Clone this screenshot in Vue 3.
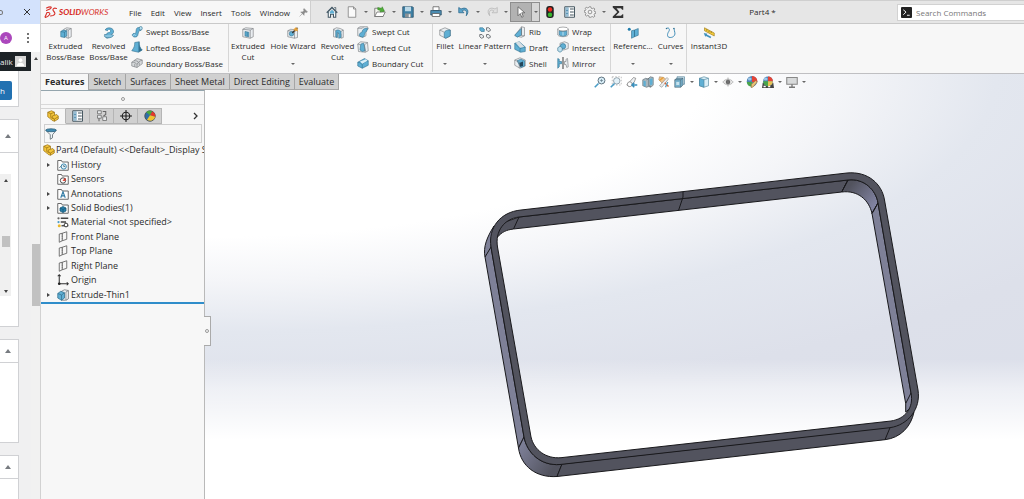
<script setup>
const B = '#5fafd4'
const D = '#33708f'
const G = '#73777b'
const L = '#e9edf0'

const icons = {
  extrude: `<path d="M5 3l4-2 6 1v11l-4 2-3-1z" fill="${L}" stroke="${G}"/><path d="M11 4l4-2M11 4v11M8 3l3 1" stroke="${G}" fill="none"/><path d="M1 6l3-2 5 1v7l-3 2-5-1z" fill="${B}" stroke="${D}"/><path d="M1 6l5 1 3-2M6 7v7" stroke="${D}" fill="none"/>`,
  revolve: `<path d="M3 4C4 0 13 0 14 5c1 4-3 5-5 6l2 2-6 2-3-5 3 0c-1-3 5-2 5-5 0-2-3-2-3 0z" fill="${B}" stroke="${D}"/><path d="M2 11c-2 4 10 5 12 0l-3-1" fill="#87c3df" stroke="${D}"/><circle cx="8" cy="5" r="1.5" fill="#fff"/>`,
  sweep: `<path d="M3 14c-3-2 0-5 2-4 3 1 0-8 5-8l4 1-1 3c-4-1-3 7-5 8-2 1-4 1-5 0z" fill="${B}" stroke="${D}"/><ellipse cx="13" cy="3" rx="2" ry="2.4" fill="#b7e0f1" stroke="${D}"/><path d="M3 13c0-2 3-2 3 0" fill="none" stroke="#d7f0fa"/>`,
  loft: `<path d="M5 2l6-1c0 6 1 8 4 11l-5 3-9-2c3-4 4-6 4-11z" fill="${B}" stroke="${D}"/><path d="M10 2c0 6 0 9 0 13l5-3c-3-3-4-5-4-11z" fill="${D}"/>`,
  boundary: `<path d="M1 7l7-5 7 2v5l-7 5-7-2z" fill="#d6d9db" stroke="${G}"/><path d="M1 7c3 0 5 0 7 3 1-3 4-5 7-6M8 10v4M4 5c3 0 5 0 7 3v3M5 13V9" fill="none" stroke="${G}"/>`,
  excut: `<path d="M1 3l4-2 10 1v11l-4 2-10-2z" fill="${L}" stroke="${G}"/><path d="M1 3l10 1 4-2M11 4v11" stroke="${G}" fill="none"/><path d="M4 6l5 1v6l-5-1z" fill="${B}" stroke="${D}"/><path d="M7 7v5" stroke="${D}"/>`,
  hole: `<path d="M1 5l4-2 9 1v10l-4 1-9-2z" fill="${L}" stroke="${G}"/><path d="M1 5l9 1 4-2M10 6v9" stroke="${G}" fill="none"/><ellipse cx="6" cy="9" rx="3" ry="3" fill="${B}" stroke="${D}"/><path d="M7 8l7-7" stroke="#333" stroke-width="2"/><path d="M12 0l1 2 2 0-1 2 1 2-3-1-2 1 0-2-2-1 2-1z" fill="#e6a23c"/>`,
  revcut: `<path d="M2 3l4-2 5 1 4 2v10l-3 1V9l-2-1-3 1v5l-5-1z" fill="${L}" stroke="${G}"/><path d="M5 5c2-2 5-1 7 1v8l-3 1V8L7 7v7l-2-1z" fill="${B}" stroke="${D}"/><path d="M2 3l3 2M12 6l3-2" stroke="${G}"/>`,
  swcut: `<path d="M1 3l3-2h10l1 3-3 2v7l-4 2-7-2z" fill="${L}" stroke="${G}"/><path d="M4 14c-2-3 0-5 3-6 0-3 2-5 7-5l-1 4c-3 0-2 6-5 8z" fill="${B}" stroke="${D}"/><path d="M1 3h6l2-2" fill="none" stroke="${G}"/>`,
  locut: `<path d="M1 4l4-3 9 1 1 11-4 2-9-1z" fill="${L}" stroke="${G}"/><path d="M5 4l4-1 2 10-4 1-3-2z" fill="${B}" stroke="${D}"/><path d="M10 5l1 10M1 4l3 1M10 5l4-3" stroke="${G}"/>`,
  bocut: `<path d="M1 7l9-5 5 3v6l-8 4-6-3z" fill="${B}" stroke="${D}"/><path d="M1 7c2 0 4 1 6 3 1-2 4-4 8-5M7 10v5" fill="none" stroke="${D}"/><path d="M4 6l8-3 2 2-7 4z" fill="#dceff7"/>`,
  fillet: `<path d="M1 4l7-3 7 3v8l-6 3-8-4z" fill="${L}" stroke="${G}"/><path d="M7 14V9c0-4 3-5 8-5v8l-6 3z" fill="${B}" stroke="${D}"/><path d="M1 4l6 3" stroke="${G}"/>`,
  pattern: `<path d="M1 1l4 0 2 2v3l-4 0-2-2z" fill="${B}" stroke="${D}"/><path d="M10 1l3 0 2 2v2l-3 1-2-2zM1 10l3 0 2 2v2l-3 1-2-2zM10 10l3 0 2 2v2l-3 1-2-2z" fill="${L}" stroke="${G}" stroke-width="1.300"/>`,
  rib: `<path d="M1 13l9-12 4 1v11l-4 2z" fill="${L}" stroke="${G}"/><path d="M1 12L10 3v9l-6 3z" fill="${B}" stroke="${D}"/><path d="M10 1v12l4 0" fill="none" stroke="${G}"/>`,
  draft: `<path d="M1 3l6-2 8 7v6l-6 1-8-4z" fill="${B}" stroke="${D}"/><path d="M1 3l7 7 7-2M8 10v5" fill="none" stroke="${D}"/><path d="M2 2l5-1 7 7-6 1z" fill="#d7dfe4"/>`,
  shell: `<path d="M1 4l7-3 7 3v8l-7 3-7-4z" fill="${L}" stroke="${G}"/><path d="M4 5l5-2 5 2v7l-5 2z" fill="${B}" stroke="${D}"/><path d="M7 8l5-2v6l-4 1z" fill="#24465a"/><path d="M1 4l6 3v8" fill="none" stroke="${G}"/>`,
  wrap: `<path d="M1 4v8c2 3 12 3 14 0V4z" fill="${L}" stroke="${G}"/><path d="M3 6c3 2 7 2 10 0v6c-3 2-7 2-10 0z" fill="${B}" stroke="${D}"/><ellipse cx="8" cy="4" rx="7" ry="2.6" fill="#fff" stroke="${G}"/><path d="M8 8v5" stroke="#fff"/>`,
  intersect: `<path d="M4 3l6-2 5 2v7l-6 2-5-3z" fill="${L}" stroke="${G}"/><circle cx="8" cy="7" r="3.6" fill="${B}" stroke="${D}"/><path d="M1 9l3-2 3 2v4l-3 2-3-2z" fill="#bfe0ee" stroke="${D}"/>`,
  mirror: `<path d="M1 2l2 1v3h3v3H3v4l-2 2z" fill="${B}" stroke="${D}"/><path d="M8 0v16" stroke="#444" stroke-width="1.4"/><path d="M10 6h2V3l2-1 1 11-2 1-1-4h-2z" fill="${L}" stroke="${G}"/>`,
  reference: `<path d="M6 5l4-1v9l-4 2zM10 4l5-2v9l-5 2z" fill="${B}" stroke="${D}"/><circle cx="3" cy="3" r="2" fill="#1e7cab"/>`,
  curves: `<path d="M2 2c3-2 5 1 3 4s-3 8 2 8 7-4 6-7 0-5-2-5" fill="none" stroke="#3c8ab5" stroke-width="1.3"/><circle cx="2" cy="2" r="1" fill="${D}"/><circle cx="12" cy="2" r="1" fill="${D}"/>`,
  instant: `<path d="M2 1l13 7v4L2 5z" fill="#f2cb3c" stroke="#9a7613"/><path d="M5 3v2M8 5v2M11 6v2" stroke="#73540c"/><path d="M1 8l5 1-1 1 6 3-1 2-6-3-1 1z" fill="#4191bd"/>`,
  home: `<path d="M3 8v7h3v-4h4v4h3V8" fill="#fff" stroke="#405563" stroke-width="1.4"/><path d="M1 9l7-7 7 7" fill="none" stroke="#405563" stroke-width="1.7"/><path d="M5 8l3-3 3 3v2H5z" fill="${B}"/><path d="M11 2h2v4" fill="none" stroke="#405563"/>`,
  file: `<path d="M3 1h7l3 3v11H3z" fill="#fafafa" stroke="#777"/><path d="M10 1v3h3" fill="none" stroke="#777"/>`,
  open: `<path d="M1 14V3h5l1 2h5v9z" fill="#f4f4ef" stroke="#666"/><path d="M1 14l3-6h11l-3 6z" fill="#fff" stroke="#666"/><path d="M5 2l5 1 1-2 3 6-6 1 1-2-4-1z" fill="#4fad39" stroke="#2f7c1e" stroke-width=".6"/>`,
  save: `<path d="M1 1h13l1 1v13H1z" fill="#3f81a6" stroke="#244c64"/><path d="M4 1h8v6H4z" fill="#bcd9e7"/><path d="M4 10h8v5H4z" fill="#8a9297"/><path d="M9 11h2v4H9z" fill="#eee"/>`,
  print: `<path d="M4 1h8v5H4z" fill="#fff" stroke="#555"/><path d="M1 6h14v6H1z" fill="#4c8db2" stroke="#264e66"/><path d="M3 10h10v4H3z" fill="#fff" stroke="#555"/>`,
  undo: `<path d="M1 2v7h7L5.500 6.500C9 4 13 6 11 13c5-6 1-13-7-9z" fill="#5ba4cb" stroke="#28678b"/>`,
  redo: `<path d="M15 2v7H8l2.500-2.500C7 4 3 6 5 13 0 7 4 0 12 4z" fill="#e0e0e0" stroke="#b5b5b5"/>`,
  cursor: `<path d="M4 1v12l3-3 2 5 2-1-2-5h4z" fill="#fff" stroke="#555"/>`,
  traffic: `<rect x="3" y="0" width="10" height="16" rx="4" fill="#222"/><circle cx="8" cy="4.500" r="3" fill="#ef2b20"/><circle cx="8" cy="11.500" r="3" fill="#37b52d"/>`,
  props: `<path d="M1 1h13v14H1z" fill="#fff" stroke="#44555f" stroke-width="1.300"/><path d="M2 2h4v12H2z" fill="#5d97b8"/><path d="M3 4h2M3 8h2M3 12h2" stroke="#fff" stroke-width="1.500"/><path d="M8 4h5M8 8h5M8 12h5" stroke="#44555f" stroke-width="1.500"/>`,
  gear: `<path d="M7 1h2l.6 2 1.500.6L13 2.600l1.400 1.400-1 1.900.6 1.500 2 .6v1.600l-2 .6-.6 1.500 1 1.900-1.400 1.400-1.900-1-1.500.6L9 15H7l-.6-2-1.500-.6-1.900 1L1.600 12l1-1.900L2 8.600 0 8V6.500l2-.6.6-1.500-1-1.400L3 1.600l1.900 1L6.400 2z" fill="#f1f1f1" stroke="#777"/><circle cx="8" cy="8" r="2.500" fill="none" stroke="#777"/>`,
  sigma: `<path d="M1 0h14v5h-1.500L12 3H6l4 5-5 5h7l2-2h1v5H1v-2L7 8 1 2z" fill="#333"/>`,
  pin: `<path d="M9 1l6 6-2 1-2-1-2 3v3l-6-6h3l3-2-1-2zM6 10l-5 5" fill="#8b8b8b" stroke="#8b8b8b"/>`,
  zoomfit: `<circle cx="10" cy="6" r="4.600" fill="#d8edf7" stroke="#60727d" stroke-width="1.300"/><path d="M6 10l-5 5" stroke="#4a9dc6" stroke-width="2.200"/><path d="M10 4v4M8 6h4" stroke="#58717e"/>`,
  zoomarea: `<path d="M3 1h12v11H3z" fill="none" stroke="#999" stroke-dasharray="2 2"/><circle cx="9" cy="6.500" r="4.300" fill="#e3f1f8" stroke="#60727d"/><path d="M6 10l-5 5" stroke="#4a9dc6" stroke-width="2.200"/>`,
  prev: `<path d="M1 12l9-10 3 1-2 5-6 6z" fill="#edf0f2" stroke="#666"/><circle cx="5" cy="11" r="3.200" fill="#fff" stroke="#666"/><path d="M8 12h7M11 9l-3 3 3 3" fill="none" stroke="#398ebb" stroke-width="2"/>`,
  section: `<path d="M1 5l4-2 3 1 3-3 4 1v10l-3 3-3-1-3 1-5-2z" fill="#a9b6bd" stroke="#56656d"/><path d="M6 5l3-2v10l3 1" fill="none" stroke="#56656d"/><path d="M2 6l3 1v7l-3-1zM10 4l4-1v8l-3 2z" fill="${B}"/>`,
  dynamic: `<path d="M2 1l6 1 4 4-6 4-5-5z" fill="#f0c48d" stroke="#a88a6c"/><path d="M2 13L12 2l2 2L5 15z" fill="#eee" stroke="#888"/><path d="M2 6l5-4" stroke="#e8a035" stroke-width="2"/><path d="M9 9l5 5" stroke="#d96735" stroke-width="1.800"/><path d="M10 15l3-7" stroke="#5d9fbf" stroke-width="1.800"/>`,
  view: `<path d="M4 1h10v10H4z" fill="#d1e8f2" stroke="#47768f"/><path d="M1 5l3-2h8v9l-3 3H1z" fill="#78b3cf" stroke="#47616f"/><path d="M1 5h8v10M9 5l3-2" fill="none" stroke="#47616f"/><path d="M3 8h4v4H3z" fill="#c8e3ee"/>`,
  display: `<path d="M2 3l6-2 6 2v10l-6 2-6-2z" fill="#d9eef7" stroke="#4c8199"/><path d="M2 3l6 2v10l-6-2z" fill="${B}" stroke="#4c8199"/><path d="M8 5l6-2" stroke="#4c8199"/>`,
  eye: `<path d="M1 8c4-5 10-5 14 0-4 5-10 5-14 0z" fill="#e7e7e7" stroke="#999"/><circle cx="8" cy="8" r="3" fill="#666"/><path d="M8 2v12" stroke="#888"/>`,
  ball: `<circle cx="8" cy="7" r="7" fill="#4f84b5"/><path d="M8 8V0a7 7 0 0 1 7 8z" fill="#e54335"/><path d="M1 8h7v6a7 7 0 0 1-7-6z" fill="#4aa54a"/><path d="M7 11l6-5 2 2-5 6-3 2z" fill="#e8c377" stroke="#89693c"/><ellipse cx="5" cy="4" rx="2.500" ry="2" fill="#9dc7e8"/>`,
  scene: `<path d="M1 9h14l1 7H0z" fill="#444"/><path d="M2 13h3v2H2zM8 13h3v2H8z" fill="#fff"/><circle cx="8" cy="7" r="6.500" fill="#4f84b5"/><path d="M8 7V0.500a6.500 6.500 0 0 1 6.500 6.500z" fill="#e54335"/><path d="M8 7h6.500a6.500 6.500 0 0 1-9 6z" fill="#e8c354"/><path d="M1.500 7H8v6.500a6.500 6.500 0 0 1-6.500-6.500z" fill="#4aa54a"/><ellipse cx="5" cy="4" rx="2.500" ry="2" fill="#9dc7e8"/>`,
  monitor: `<path d="M1 2h14v9H1z" fill="#d8dadb" stroke="#888" stroke-width="1.400"/><path d="M8 11v3M4 15h8" stroke="#777" stroke-width="1.800"/>`,
  part: `<path d="M1 3l5-2 4 2v4l3-1 2 2v4l-5 3-3-1-2-2-4-3z" fill="#f4c63b" stroke="#9c7415"/><path d="M1 3l4 2 5-2M5 5v5l4 2M10 7l-3 1v2l3 2 5-3M10 12v3" fill="none" stroke="#9c7415"/>`,
  config: `<path d="M2 1h5v4H2zM2 7h5v4H2zM9 9h5v5H9z" fill="#e8eaec" stroke="#666"/><path d="M9 2h4v4l-3 2M4 11v4" fill="none" stroke="#666" stroke-width="1.400"/>`,
  target: `<circle cx="8" cy="8" r="5" fill="none" stroke="#222" stroke-width="1.500"/><path d="M8 0v16M0 8h16" stroke="#222" stroke-width="1.500"/>`,
  ball2: `<circle cx="8" cy="8" r="7" fill="#2f6ea8" stroke="#444"/><path d="M8 7L3 3a7 7 0 0 1 8-1z" fill="#48a83f"/><path d="M8 7l3-5a7 7 0 0 1 4 7z" fill="#e5382b"/><path d="M8 7l7 2a7 7 0 0 1-11 4z" fill="#f0c332"/>`,
  filter: `<path d="M1 3l6 6v6l3-2V9l5-6z" fill="#eff5f8" stroke="#4c5b63"/><ellipse cx="8" cy="3" rx="7" ry="2" fill="#3f8cb4" stroke="#2d5f7a"/>`,
  history: `<path d="M1 2h5l1 2h8v11H1z" fill="#fff" stroke="#666" stroke-width="1.300"/><circle cx="9" cy="10" r="3.500" fill="#e3f2f9" stroke="#3786ae" stroke-width="1.300"/><path d="M9 8v2h2M3 12l3-3" fill="none" stroke="#3a5868"/>`,
  sensors: `<path d="M1 2h5l1 2h8v11H1z" fill="#fff" stroke="#666" stroke-width="1.300"/><circle cx="8" cy="10" r="3.600" fill="#fff" stroke="#444" stroke-width="1.300"/><path d="M8 10l3-3v3z" fill="#d83528" stroke="#d83528"/>`,
  annot: `<path d="M1 2h5l1 2h8v11H1z" fill="#fff" stroke="#666" stroke-width="1.300"/><path d="M5 13l3-8 3 8M6 10.500h4" fill="none" stroke="#2e79a3" stroke-width="1.500"/>`,
  bodies: `<path d="M1 2h5l1 2h8v11H1z" fill="#fff" stroke="#666" stroke-width="1.300"/><path d="M4 8l4-2 4 2v4l-4 2-4-2z" fill="#2982ad" stroke="#1b5573"/><path d="M4 8l4 2 4-2M8 10v4" fill="none" stroke="#1b5573"/>`,
  material: `<path d="M5 3h10M5 8h7" stroke="#444" stroke-width="1.800"/><path d="M6 13h9" stroke="#444" stroke-width="1.800"/><circle cx="2" cy="3" r="1.500" fill="#666"/><circle cx="2" cy="8" r="1.500" fill="#4b9cc9"/><circle cx="3" cy="13" r="2" fill="#e9b82c"/><circle cx="12" cy="12" r="2.500" fill="#fff" stroke="#333" stroke-width="1.300"/>`,
  plane: `<path d="M3 4l4-1v10l-4 2zM7 3l6-2v10l-6 2" fill="none" stroke="#666" stroke-width="1.200"/><path d="M7 3v10" stroke="#666" stroke-dasharray="2 1"/>`,
  origin: `<path d="M3 1v12h12M1 3l2-2 2 2M13 11l2 2-2 2" fill="none" stroke="#333" stroke-width="1.400"/><circle cx="3" cy="13" r="1.800" fill="#222"/>`,
  thin: `<path d="M6 3l4-2 5 1v11l-4 2H6z" fill="${L}" stroke="${G}"/><path d="M12 4v11l3-2V2z" fill="#fff" stroke="${G}"/><path d="M1 6l4-3 5 2v7l-4 3-5-3z" fill="${B}" stroke="${D}"/><path d="M1 6l5 2 4-3M6 8v7" fill="none" stroke="${D}"/>`,
}

const menus = ['File', 'Edit', 'View', 'Insert', 'Tools', 'Window']
const quick = [
  { icon: 'home', label: 'Home' },
  { icon: 'file', label: 'New', more: true },
  { icon: 'open', label: 'Open', more: true },
  { icon: 'save', label: 'Save', more: true },
  { icon: 'print', label: 'Print', more: true },
  { icon: 'undo', label: 'Undo', more: true },
  { icon: 'redo', label: 'Redo', more: true },
  { icon: 'cursor', label: 'Select', more: true, active: true },
  { icon: 'traffic', label: 'Rebuild' },
  { icon: 'props', label: 'File Properties' },
  { icon: 'gear', label: 'Options', more: true },
  { icon: 'sigma', label: 'Equations' },
]
const ribbon = [
  { id: 'boss', columns: [
    { icon: 'extrude', lines: ['Extruded', 'Boss/Base'] },
    { icon: 'revolve', lines: ['Revolved', 'Boss/Base'] },
    { list: [['sweep', 'Swept Boss/Base'], ['loft', 'Lofted Boss/Base'], ['boundary', 'Boundary Boss/Base']] },
  ] },
  { id: 'cut', columns: [
    { icon: 'excut', lines: ['Extruded', 'Cut'] },
    { icon: 'hole', lines: ['Hole Wizard'], more: true },
    { icon: 'revcut', lines: ['Revolved', 'Cut'] },
    { list: [['swcut', 'Swept Cut'], ['locut', 'Lofted Cut'], ['bocut', 'Boundary Cut']] },
  ] },
  { id: 'modify', columns: [
    { icon: 'fillet', lines: ['Fillet'], more: true },
    { icon: 'pattern', lines: ['Linear Pattern'], more: true },
    { list: [['rib', 'Rib'], ['draft', 'Draft'], ['shell', 'Shell']] },
    { list: [['wrap', 'Wrap'], ['intersect', 'Intersect'], ['mirror', 'Mirror']] },
  ] },
  { id: 'geometry', columns: [
    { icon: 'reference', lines: ['Referenc...'], more: true },
    { icon: 'curves', lines: ['Curves'], more: true },
  ] },
  { id: 'instant', columns: [{ icon: 'instant', lines: ['Instant3D'] }] },
]
const tabs = ['Features', 'Sketch', 'Surfaces', 'Sheet Metal', 'Direct Editing', 'Evaluate']
const viewTools = [
  { icon: 'zoomfit', label: 'Zoom to Fit' },
  { icon: 'zoomarea', label: 'Zoom to Area' },
  { icon: 'prev', label: 'Previous View' },
  { icon: 'section', label: 'Section View' },
  { icon: 'dynamic', label: 'Dynamic Annotation Views' },
  { icon: 'view', label: 'View Orientation', more: true },
  { icon: 'display', label: 'Display Style', more: true },
  { icon: 'eye', label: 'Hide/Show Items', more: true },
  { icon: 'ball', label: 'Edit Appearance' },
  { icon: 'scene', label: 'Apply Scene', more: true },
  { icon: 'monitor', label: 'View Settings', more: true },
]
const panelTabs = [
  ['part', 'FeatureManager'],
  ['props', 'PropertyManager'],
  ['config', 'ConfigurationManager'],
  ['target', 'DimXpertManager'],
  ['ball2', 'DisplayManager'],
]
const tree = [
  { icon: 'history', text: 'History', open: true },
  { icon: 'sensors', text: 'Sensors' },
  { icon: 'annot', text: 'Annotations', open: true },
  { icon: 'bodies', text: 'Solid Bodies(1)', open: true },
  { icon: 'material', text: 'Material <not specified>' },
  { icon: 'plane', text: 'Front Plane' },
  { icon: 'plane', text: 'Top Plane' },
  { icon: 'plane', text: 'Right Plane' },
  { icon: 'origin', text: 'Origin' },
  { icon: 'thin', text: 'Extrude-Thin1', open: true },
]
</script>

<template>
  <div class="screen">
    <aside class="browser">
      <div class="tabstrip">
        <i class="tab-dot"></i>
        <button class="close" aria-label="Close tab">
          <svg viewBox="0 0 8 8"><path d="M1 1l6 6M7 1L1 7" stroke="#333" fill="none" /></svg>
        </button>
      </div>
      <div class="addressbar">
        <span class="profile">A</span>
        <button class="dots" aria-label="Browser menu"><i></i><i></i><i></i></button>
      </div>
      <div class="page">
        <div class="page-main">
          <div class="adminbar"><span>alik</span>
            <svg viewBox="0 0 12 12"><path d="M0 0h12v12H0z" fill="#d6d6d6" /><circle cx="6" cy="4.500" r="2" fill="#fff" /><path d="M2 11c0-5 8-5 8 0z" fill="#fff" /></svg>
          </div>
          <div class="box box-top"><button class="publish">h</button></div>
          <div class="box box-tall">
            <div class="box-head"><i class="up"></i></div>
            <div class="mini-scroll"><i class="up small"></i><i class="mini-thumb"></i><i class="down"></i></div>
          </div>
          <div class="box box-mid"><div class="box-head short"><i class="up"></i></div></div>
          <div class="box box-last"><div class="box-head short"><i class="up"></i></div></div>
        </div>
        <div class="page-scroll"><i class="up small"></i><i class="thumb"></i></div>
      </div>
    </aside>

    <div class="app">
      <header class="titlebar">
        <div class="menu">
          <div class="brand">
            <svg viewBox="0 0 26 26"><path d="M5 4c6-3 11-3 9 0-1 2-4 3-7 4l-2 1M3 23c7-2 12-9 6-10l-3 0-4 9M25 5c-5-2-9 1-6 5 3 3 5 7-1 9l-5 1" fill="none" stroke="#d8322b" stroke-width="2.200" stroke-linecap="round" /></svg>
            <span class="word"><b>SOLID</b>WORKS</span>
          </div>
          <nav class="menus"><a v-for="m in menus" :key="m" href="#">{{ m }}</a></nav>
          <button class="pin" aria-label="Pin menu"><svg viewBox="0 0 16 16" v-html="icons.pin"></svg></button>
        </div>
        <div class="quick">
          <div v-for="q in quick" :key="q.label" class="q" :class="{ active: q.active, more: q.more }">
            <button :aria-label="q.label"><svg viewBox="0 0 16 16" v-html="icons[q.icon]"></svg></button>
            <button v-if="q.more" class="drop" :aria-label="q.label + ' options'"><i class="caret"></i></button>
          </div>
        </div>
        <div class="doc">Part4 *</div>
        <label class="search">
          <svg viewBox="0 0 12 12"><rect width="12" height="12" rx="1" fill="#222" /><path d="M2.500 3l3 2.500-3 3M6.500 9h3" fill="none" stroke="#fff" /></svg>
          <input type="text" placeholder="Search Commands" aria-label="Search Commands" />
        </label>
      </header>

      <div class="ribbon">
        <div v-for="g in ribbon" :key="g.id" class="group" :class="g.id">
          <template v-for="(c, i) in g.columns" :key="i">
            <div v-if="c.list" class="list">
              <button v-for="r in c.list" :key="r[1]" class="row">
                <svg viewBox="0 0 16 16" v-html="icons[r[0]]"></svg><span>{{ r[1] }}</span>
              </button>
            </div>
            <button v-else class="big">
              <svg viewBox="0 0 16 16" v-html="icons[c.icon]"></svg>
              <span v-for="l in c.lines" :key="l">{{ l }}</span>
              <i v-if="c.more" class="caret"></i>
            </button>
          </template>
        </div>
      </div>

      <main class="work">
        <svg class="model" viewBox="41 74 983 425" preserveAspectRatio="xMidYMid slice" role="img" aria-label="Thin rectangular frame">
          <defs>
            <linearGradient id="cornerA" x1="847" y1="184" x2="874" y2="205" gradientUnits="userSpaceOnUse"><stop offset="0.1" stop-color="#52535e" /><stop offset="1" stop-color="#8082a0" /></linearGradient>
            <linearGradient id="cornerB" x1="520" y1="448" x2="556" y2="472" gradientUnits="userSpaceOnUse"><stop offset="0" stop-color="#7c7e96" /><stop offset="0.9" stop-color="#52535e" /></linearGradient>
          </defs>
          <g stroke="#19191c" stroke-width="1" stroke-linejoin="round">
            <path fill="#7e8097" d="M494 226C487 237 483 247 485 257L518.500 448L524 437L491 247Z" />
            <path fill="url(#cornerB)" d="M518.500 448C521 466 536 478 557 476.500L562 464.300L560 464.500C541 466 527 453 524 437Z" />
            <path fill="#52535e" d="M557 476.500L885 439.700C900 438 911 427 914 412L890 427L562 464Z" />
            <path fill="#52535e" d="M497.500 237C502 232 506 230 513.500 229L841.700 192L848 180L519 217L497 225Z" />
            <path fill="url(#cornerA)" d="M841.700 192C858 190 869 200 872 213.500L878 203C876 190 864 178 848 180Z" />
            <path fill="#7e8097" d="M872 213.500L905.700 403.500V412L914 405L911 393L878 203Z" />
            <path fill="#52535e" fill-rule="evenodd" d="M521 210L847 173C868 171 882 184 884.500 200L918 390C921 409 908 425 890 427.700L560 464.500C541 466 527 453 524 437L491 247C488 228 500 212 521 210ZM519 217L848 180C864 178 876 190 878 203L911 393C914 408 905 419 891 421L561 457.700C546 459 534 450 531 437L497.500 247C495 231 504 219 519 217Z" />
            <path fill="none" d="M519 217L513.500 229M683 192V197L678.500 210.500M848 180L841.700 192M878 203L872 213.500M491 247L485 257M890 427.700L885 439.700M911 393L905.700 403.500" />
          </g>
        </svg>

        <div class="topline">
          <nav class="tabs" aria-label="Command manager">
            <button v-for="(t, i) in tabs" :key="t" :class="{ on: i === 0 }">{{ t }}</button>
          </nav>
          <div class="headsup">
            <template v-for="v in viewTools" :key="v.label">
              <button :aria-label="v.label"><svg viewBox="0 0 16 16" v-html="icons[v.icon]"></svg><i v-if="v.more" class="caret"></i></button>
            </template>
          </div>
        </div>

        <section class="panel">
          <div class="grip"><i></i></div>
          <div class="ptabs">
            <button v-for="(p, i) in panelTabs" :key="p[1]" :class="{ on: i === 0 }" :aria-label="p[1]">
              <svg viewBox="0 0 16 16" v-html="icons[p[0]]"></svg>
            </button>
            <button class="next" aria-label="More tabs"><svg viewBox="0 0 8 8"><path d="M2 1l3 3-3 3" fill="none" stroke="#333" stroke-width="1.300" /></svg></button>
          </div>
          <label class="filter">
            <svg viewBox="0 0 16 16" v-html="icons.filter"></svg>
            <input type="text" aria-label="Filter tree" />
          </label>
          <ul class="tree">
            <li class="root"><svg viewBox="0 0 16 16" v-html="icons.part"></svg><span>Part4 (Default) &lt;&lt;Default&gt;_Display S</span></li>
            <li v-for="n in tree" :key="n.text">
              <i class="twist" :class="{ show: n.open }"></i>
              <svg viewBox="0 0 16 16" v-html="icons[n.icon]"></svg>
              <span>{{ n.text }}</span>
            </li>
          </ul>
          <div class="rollback"></div>
          <button class="handle" aria-label="Collapse panel"><i></i></button>
        </section>
      </main>
    </div>
  </div>
</template>

<style>
body { overflow: hidden; }
</style>

<style scoped>
* { box-sizing: border-box; }
.screen { display: flex; height: 100vh; overflow: hidden; background: #f0f0f1; color: #2b2b2b; font: 9px/12px "Open Sans", "Noto Sans", sans-serif; }
button, input { font: inherit; color: inherit; border: 0; padding: 0; margin: 0; background: none; }
svg, i { display: block; flex: none; }
a { color: inherit; text-decoration: none; }
.caret { border: 2px solid transparent; border-top-color: #666; border-bottom: 0; }
.up { border: 3px solid transparent; border-bottom: 4px solid #777b80; border-top: 0; }
.up.small { border-width: 0 2px 3px; border-bottom-color: #444; }
.down { border: 2px solid transparent; border-top: 3px solid #444; border-bottom: 0; }

.browser { width: 41px; flex: none; display: flex; flex-direction: column; border-right: 1px solid #d2d2d2; overflow: hidden; }
.tabstrip { height: 24px; flex: none; background: #d3e2fc; display: flex; align-items: center; justify-content: space-between; padding-right: 9px; }
.tab-dot { width: 3px; height: 5px; border: 1px solid #777; border-left: 0; border-radius: 0 3px 3px 0; }
.close svg { width: 8px; height: 8px; }
.addressbar { height: 28px; flex: none; background: #fff; display: flex; align-items: center; justify-content: space-between; padding-right: 11px; }
.profile { width: 12px; height: 12px; border-radius: 6px; background: #ab47bc; color: #fff; font-size: 6px; text-align: center; }
.dots { display: grid; gap: 2px; }
.dots i { width: 2px; height: 2px; border-radius: 1px; background: #444; }
.page { flex: 1; display: flex; min-height: 0; }
.page-main { flex: 1; display: flex; flex-direction: column; min-width: 0; }
.page-scroll { width: 9px; flex: none; background: #f1f1f1; padding-top: 5px; display: flex; flex-direction: column; align-items: center; }
.page-scroll .thumb { width: 8px; height: 62px; margin-top: 184px; background: #c1c1c1; }
.adminbar { height: 19px; flex: none; background: #1d2327; color: #eee; display: flex; align-items: center; justify-content: space-between; font-size: 8px; padding-right: 5px; }
.adminbar svg { width: 11px; height: 11px; }
.box { width: 19px; flex: none; background: #fff; border: 1px solid #d0d1d4; border-left: 0; margin-bottom: 12px; }
.box-top { height: 36px; border-top: 0; padding-top: 10px; }
.publish { display: block; width: 12px; height: 19px; background: #2271b1; color: #fff; border-radius: 0 2px 2px 0; text-align: left; font-size: 8px; }
.box-tall { height: 208px; }
.box-mid { height: 104px; }
.box-last { height: 104px; }
.box-head { height: 33px; border-bottom: 1px solid #d0d1d4; display: flex; align-items: center; padding-left: 5px; }
.box-head.short { height: 23px; }
.mini-scroll { width: 11px; height: 122px; margin-top: 21px; padding: 5px 0; background: #f0f0f0; display: flex; flex-direction: column; align-items: center; }
.mini-thumb { width: 8px; height: 11px; margin: 54px 0 43px; background: #c1c1c1; }

.app { flex: 1; min-width: 0; display: flex; flex-direction: column; }
.titlebar { height: 24px; flex: none; display: flex; background: #e6e6e6; border-top: 1px solid #cfcfcf; border-bottom: 1px solid #c9c9c9; font-size: 8px; }
.menu { width: 270px; flex: none; display: flex; align-items: center; padding-left: 3px; background: #f7f7f7; border-right: 1px solid #cfcfcf; }
.brand { display: flex; align-items: center; gap: 2px; width: 85px; color: #d8322b; }
.brand svg { width: 13px; height: 13px; }
.word { font-family: Lato, sans-serif; font-style: italic; font-size: 8px; }
.word b { font-weight: 900; }
.menus { display: flex; gap: 9px; padding-top: 2px; }
.pin { margin-left: 9px; }
.pin svg { width: 9px; height: 9px; }
.quick { display: flex; align-items: center; padding-left: 11px; }
.q { display: flex; height: 20px; align-items: center; }
.q > button { width: 20px; height: 20px; display: flex; align-items: center; justify-content: center; }
.q svg { width: 12px; height: 12px; }
.q > .drop { width: 8px; }
.q.active { background: #b2b2b2; border: 1px solid #8e8e8e; }
.q.active .drop { background: #d6d6d6; border-left: 1px solid #8e8e8e; height: 18px; }
.q.active > button { height: 18px; }
.doc { flex: 1; text-align: center; align-self: center; }
.search { width: 127px; flex: none; margin: 3px 0 2px; display: flex; align-items: center; gap: 4px; padding-left: 3px; background: #fff; border: 1px solid #d2d2d2; border-right: 0; }
.search svg { width: 11px; height: 11px; }
.search input { min-width: 0; flex: 1; outline: 0; }
.search input::placeholder { color: #777; opacity: 1; }

.ribbon { height: 50px; flex: none; display: flex; padding-left: 3px; background: #f7f7f7; border-bottom: 1px solid #bfbfc2; font-size: 8px; line-height: 11px; }
.ribbon svg, .headsup svg { stroke-width: 0.8; }
.group { display: grid; border-right: 1px solid #d6d6d6; height: 48px; white-space: nowrap; }
.boss { grid-template-columns: 43px 43px 98px; }
.cut { grid-template-columns: 38px 52px 37px 76px; }
.modify { grid-template-columns: 24px 56px 43px 54px; }
.geometry { grid-template-columns: 44px 31px; }
.instant { grid-template-columns: 44px; border-right: 0; }
.big { display: flex; flex-direction: column; align-items: center; padding-top: 3px; height: 48px; }
.big svg { width: 12px; height: 12px; margin-bottom: 1px; }
.big .caret { margin-top: 12px; }
.list { display: grid; grid-template-rows: 15px 16px 16px; padding-left: 1px; }
.row { display: flex; align-items: center; gap: 3px; text-align: left; }
.row svg { width: 12px; height: 12px; }

.work { flex: 1; min-height: 0; display: grid; grid-template: 16px minmax(0, 1fr) / 164px minmax(0, 1fr);
  background: linear-gradient(180deg, rgba(255,255,255,0) 67%, rgba(255,255,255,.5) 74%, #fff 86%), radial-gradient(87% 66% at 17% 0, #fff 58%, #f4f5f8 74%, #e3e7ef 92%, #dde0ea 120%, #dadeea 170%); }
.model { grid-area: 1 / 1 / 3 / 3; width: 100%; height: 100%; min-height: 0; }
.topline { grid-area: 1 / 1 / 2 / 3; display: flex; }
.tabs { display: flex; height: 16px; }
.tabs button { padding: 0 4px; background: #d0d0d0; border-right: 1px solid #a5a5a5; border-bottom: 1px solid #a9a9a9; white-space: nowrap; line-height: 14px; }
.tabs .on { background: #f7f7f7; font-weight: 700; border-bottom: 0; }
.headsup { display: flex; align-items: center; margin-left: 253px; height: 16px; }
.headsup button { display: flex; align-items: center; gap: 4px; padding: 0 2px; }
.headsup svg { width: 12px; height: 12px; }

.panel { grid-area: 2 / 1 / 3 / 2; position: relative; background: #f7f7f7; border-top: 1px solid #94a5ad; border-right: 1px solid #b9b9b9; display: flex; flex-direction: column; }
.grip { height: 14px; flex: none; border-bottom: 1px solid #d9d9d9; display: flex; justify-content: center; align-items: center; padding-top: 3px; }
.grip i, .handle i { width: 4px; height: 4px; border: 1px solid #999; border-radius: 2px; }
.ptabs { display: flex; height: 16px; margin-top: 3px; flex: none; }
.ptabs button { width: 24px; display: flex; align-items: center; justify-content: center; background: #d0d0d0; border: 1px solid #b5b5b5; border-left: 0; }
.ptabs .on { width: 25px; background: #f7f7f7; border-color: #d5d5d5 #b5b5b5 transparent; }
.ptabs svg { width: 12px; height: 12px; }
.ptabs .next { margin-left: auto; width: 16px; background: none; border: 0; }
.ptabs .next svg { width: 8px; height: 8px; }
.filter { height: 19px; flex: none; margin: 0 2px 0 3px; border: 1px solid #cfcfcf; display: flex; align-items: center; }
.filter svg { width: 12px; height: 12px; }
.filter input { flex: 1; min-width: 0; outline: 0; }
.tree { list-style: none; margin: 0; padding: 0; height: 159px; flex: none; display: grid; grid-auto-rows: 1fr; overflow: hidden; white-space: nowrap; }
.tree li { display: flex; align-items: center; gap: 2px; padding-left: 6px; min-width: 0; }
.tree .root { padding-left: 2px; gap: 1px; }
.tree svg { width: 12px; height: 12px; }
.twist { width: 8px; height: 4px; }
.twist.show { width: 3px; margin-right: 5px; border: 2px solid transparent; border-left: 3px solid #444; border-right: 0; }
.rollback { height: 2px; flex: none; background: #2f8dca; }
.handle { position: absolute; left: 163px; top: 225px; width: 7px; height: 30px; background: #f7f7f7; border: 1px solid #aaa; border-left: 0; display: flex; align-items: center; justify-content: center; }
</style>
